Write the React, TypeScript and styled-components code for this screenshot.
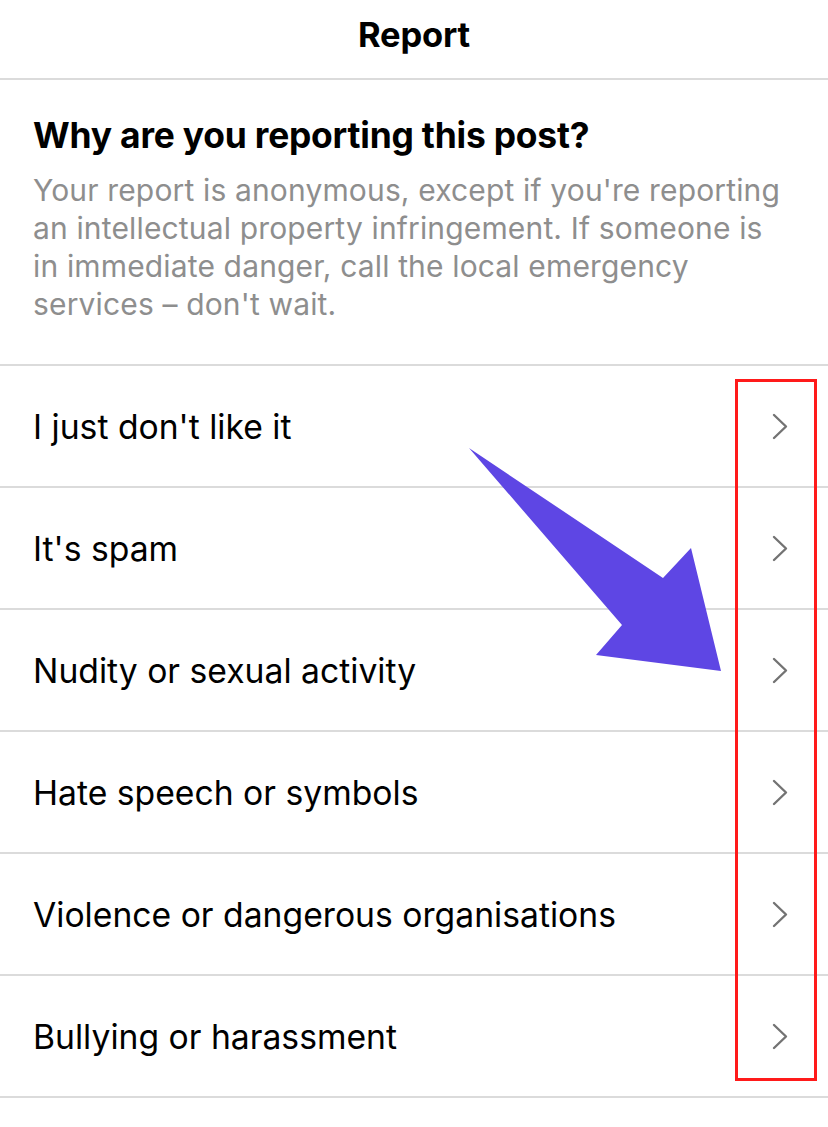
import React from "react";
import styled, { createGlobalStyle } from "styled-components";

const GlobalStyle = createGlobalStyle`
  html, body { margin: 0; padding: 0; background: #ffffff; }
  body { font-family: Inter, "Noto Sans", sans-serif; -webkit-font-smoothing: antialiased; }
`;

const Page = styled.div`
  position: relative;
  width: 828px;
  min-height: 1127px;
  background: #fff;
  overflow: hidden;
`;

const Header = styled.header`
  height: 80px;
  display: flex;
  align-items: center;
  justify-content: center;
  border-bottom: 2px solid #dbdbdb;
  box-sizing: border-box;
  padding-bottom: 10px;
`;

const HeaderTitle = styled.h1`
  margin: 0;
  font-size: 34.5px;
  font-weight: 700;
  color: #000;
  letter-spacing: -0.2px;
`;

const Intro = styled.section`
  padding: 36px 33px 41px 33px;
  border-bottom: 2px solid #dbdbdb;
`;

const Title = styled.h2`
  margin: 0 0 15px 0;
  font-size: 35.4px;
  font-weight: 700;
  color: #000;
  letter-spacing: -0.2px;
  line-height: 40px;
`;

const Description = styled.p`
  margin: 0;
  font-size: 30px;
  line-height: 38px;
  letter-spacing: 0.15px;
  color: #8e8e8e;
`;

const List = styled.ul`
  list-style: none;
  margin: 0;
  padding: 0;
`;

const Row = styled.li`
  height: 122px;
  box-sizing: border-box;
  border-bottom: 2px solid #dbdbdb;
  display: flex;
  align-items: center;
  justify-content: space-between;
  padding: 0 40px 0 33px;
`;

const RowLabel = styled.span`
  font-size: 33.7px;
  color: #000;
`;

const Chevron = styled.svg`
  width: 16px;
  height: 27px;
  flex-shrink: 0;
`;

const Highlight = styled.div`
  position: absolute;
  left: 735px;
  top: 379px;
  width: 82px;
  height: 702px;
  box-sizing: border-box;
  border: 3px solid #ff1a1a;
  pointer-events: none;
`;

const ArrowSvg = styled.svg`
  position: absolute;
  left: 0;
  top: 0;
  width: 828px;
  height: 1127px;
  pointer-events: none;
`;

const reasons = [
  "I just don't like it",
  "It's spam",
  "Nudity or sexual activity",
  "Hate speech or symbols",
  "Violence or dangerous organisations",
  "Bullying or harassment",
];

export default function App() {
  return (
    <>
      <GlobalStyle />
      <Page>
        <Header>
          <HeaderTitle>Report</HeaderTitle>
        </Header>
        <Intro>
          <Title>Why are you reporting this post?</Title>
          <Description>
            Your report is anonymous, except if you're reporting an intellectual property
            infringement. If someone is in immediate danger, call the local emergency
            services – don't wait.
          </Description>
        </Intro>
        <List>
          {reasons.map((r) => (
            <Row key={r}>
              <RowLabel>{r}</RowLabel>
              <Chevron viewBox="0 0 16 27" aria-hidden>
                <polyline
                  points="2,2 14,13.5 2,25"
                  fill="none"
                  stroke="#737373"
                  strokeWidth="2.4"
                  strokeLinecap="round"
                  strokeLinejoin="round"
                />
              </Chevron>
            </Row>
          ))}
        </List>
        <Highlight />
        <ArrowSvg viewBox="0 0 828 1127" aria-hidden>
          <polygon
            points="469,448 663,578 691,548 721,671 596,655 622,625"
            fill="#5e46e4"
          />
        </ArrowSvg>
      </Page>
    </>
  );
}
